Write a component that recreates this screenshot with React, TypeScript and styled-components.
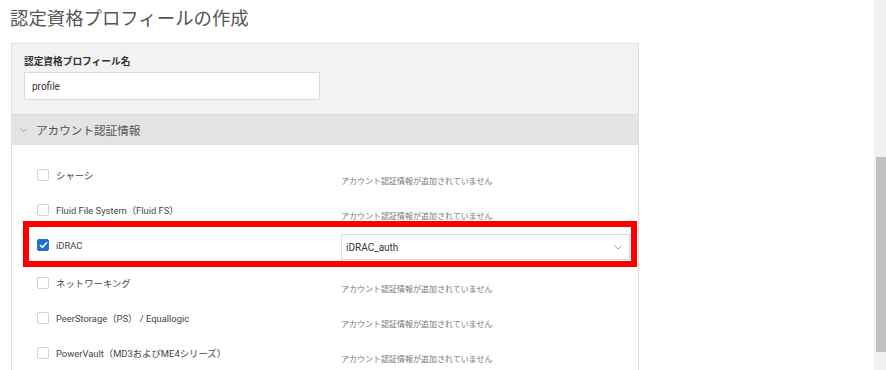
import React from 'react';
import styled, { createGlobalStyle } from 'styled-components';

const GlobalStyle = createGlobalStyle`
  html, body {
    margin: 0;
    padding: 0;
    background: #fff;
  }
  body {
    font-family: Roboto, "Noto Sans CJK JP", sans-serif;
    color: #333;
  }
  * {
    box-sizing: border-box;
  }
`;

const Page = styled.div`
  display: flex;
  width: 886px;
  height: 370px;
  overflow: hidden;
`;

const Main = styled.div`
  flex: 1;
  padding-left: 11px;
`;

const Title = styled.h1`
  margin: 0 0 0 -1px;
  height: 43px;
  padding-top: 6px;
  font-size: 18.4px;
  line-height: 26px;
  font-weight: 400;
  color: #555;
`;

const Panel = styled.div`
  width: 628px;
  border: 1px solid #dedede;
  border-bottom: none;
  height: 340px;
  display: flex;
  flex-direction: column;
`;

const NameSection = styled.div`
  background: #f2f2f2;
  padding: 11px 12px 14px;
`;

const FieldLabel = styled.div`
  font-size: 9.7px;
  line-height: 14px;
  font-weight: 700;
  color: #333;
  margin-bottom: 3px;
`;

const TextInput = styled.div`
  width: 296px;
  height: 28px;
  background: #fff;
  border: 1px solid #dadada;
  padding-left: 7px;
  display: flex;
  align-items: center;
  font-size: 10px;
  color: #333;
`;

const SectionHeader = styled.div`
  height: 31px;
  background: #e3e3e3;
  border-top: 1px solid #d8d8d8;
  display: flex;
  align-items: center;
  padding-left: 8px;
  gap: 9px;
  font-size: 11.6px;
  color: #555;
`;

const Body = styled.div`
  flex: 1;
  background: #fff;
  padding-top: 19px;
`;

const Row = styled.div<{ $tall?: boolean }>`
  position: relative;
  display: grid;
  grid-template-columns: 304px 289px;
  height: ${({ $tall }) => ($tall ? '38px' : '35px')};
  padding-left: 25px;
`;

const Highlight = styled.div`
  position: absolute;
  left: 11px;
  top: -13px;
  width: 614px;
  height: 46px;
  border: 6px solid #ff0000;
  pointer-events: none;
`;

const CheckCell = styled.label`
  display: flex;
  align-items: center;
  gap: 7px;
  height: 22px;
  font-size: 9.4px;
  color: #444;
`;

const Box = styled.span<{ $checked?: boolean }>`
  width: 12px;
  height: 12px;
  border-radius: 2px;
  border: 1px solid ${({ $checked }) => ($checked ? '#1f6fd0' : '#d2d2d2')};
  background: ${({ $checked }) => ($checked ? '#1f6fd0' : '#fff')};
  display: flex;
  align-items: center;
  justify-content: center;
  flex-shrink: 0;
`;

const Empty = styled.div`
  padding-top: 12px;
  font-size: 8px;
  line-height: 11px;
  color: #777;
`;

const Select = styled.div`
  height: 26px;
  border: 1px solid #dcdcdc;
  background: #fff;
  display: flex;
  align-items: center;
  justify-content: space-between;
  padding: 0 7px 0 4px;
  font-size: 10px;
  color: #333;
`;

const Scrollbar = styled.div`
  width: 12px;
  height: 370px;
  background: #f1f1f1;
  padding: 157px 0 0 2px;
`;

const Thumb = styled.div`
  height: 195px;
  background: #c1c1c1;
`;

const Chevron = ({ w, color }: { w: number; color: string }) => (
  <svg width={w} height={w / 2 + 1} viewBox="0 0 10 6" fill="none">
    <path d="M0.5 0.5 L5 5 L9.5 0.5" stroke={color} strokeWidth="1.2" />
  </svg>
);

const Check = () => (
  <svg width="9" height="8" viewBox="0 0 9 8" fill="none">
    <path d="M1 4 L3.4 6.3 L8 1.3" stroke="#fff" strokeWidth="1.6" />
  </svg>
);

const EMPTY_TEXT = 'アカウント認証情報が追加されていません';

const rows = [
  { name: 'シャーシ' },
  { name: 'Fluid File System（Fluid FS）' },
  { name: 'iDRAC', checked: true, value: 'iDRAC_auth' },
  { name: 'ネットワーキング' },
  { name: 'PeerStorage（PS） / Equallogic' },
  { name: 'PowerVault（MD3およびME4シリーズ）' },
];

export default function App() {
  return (
    <>
      <GlobalStyle />
      <Page>
        <Main>
          <Title>認定資格プロフィールの作成</Title>
          <Panel>
            <NameSection>
              <FieldLabel>認定資格プロフィール名</FieldLabel>
              <TextInput>profile</TextInput>
            </NameSection>
            <SectionHeader>
              <Chevron w={7} color="#999" />
              アカウント認証情報
            </SectionHeader>
            <Body>
              {rows.map((row) => (
                <Row key={row.name} $tall={row.checked}>
                  <CheckCell>
                    <Box $checked={row.checked}>{row.checked && <Check />}</Box>
                    {row.name}
                  </CheckCell>
                  {row.value ? (
                    <Select>
                      {row.value}
                      <Chevron w={8} color="#999" />
                    </Select>
                  ) : (
                    <Empty>{EMPTY_TEXT}</Empty>
                  )}
                  {row.checked && <Highlight />}
                </Row>
              ))}
            </Body>
          </Panel>
        </Main>
        <Scrollbar>
          <Thumb />
        </Scrollbar>
      </Page>
    </>
  );
}
